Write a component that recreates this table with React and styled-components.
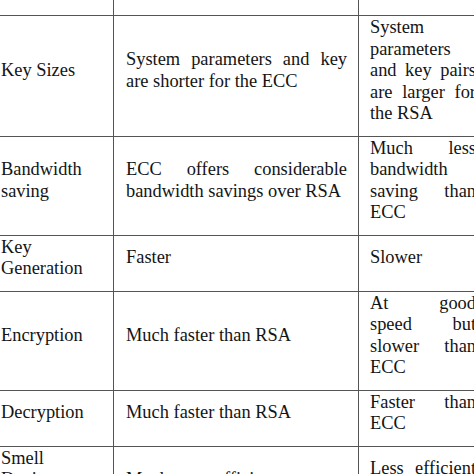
import React from 'react';
import styled, { createGlobalStyle } from 'styled-components';

const GlobalStyle = createGlobalStyle`
  html, body {
    margin: 0;
    padding: 0;
    background: #fff;
    overflow: hidden;
  }
`;

const Table = styled.div`
  display: grid;
  grid-template-columns: 113px 244px 130px;
  grid-auto-rows: auto;
  gap: 1px;
  background-color: #555;
  width: max-content;
  font-family: "Liberation Serif", "Times New Roman", serif;
  font-size: 18.4px;
  line-height: 21.5px;
  color: #141414;
`;

const HeadCell = styled.div`
  background-color: #fff;
  height: 15px;
`;

const Cell = styled.div`
  background-color: #fff;
  display: flex;
  flex-direction: column;
  justify-content: center;
  padding: 1px ${(p) => p.$right}px 11px ${(p) => p.$left}px;
  text-align: ${(p) => (p.$justify ? 'justify' : 'left')};
`;

const rows = [
  ['Key Sizes', 'System parameters and key are shorter for the ECC', 'System parameters and key pairs are larger for the RSA'],
  ['Bandwidth saving', 'ECC offers considerable bandwidth savings over RSA', 'Much less bandwidth saving than ECC'],
  ['Key Generation', 'Faster', 'Slower'],
  ['Encryption', 'Much faster than RSA', 'At good speed but slower than ECC'],
  ['Decryption', 'Much faster than RSA', 'Faster than ECC'],
  ['Smell Devices Application', 'Much more efficient', 'Less efficient than ECC'],
];

const App = () => {
  return (
    <>
      <GlobalStyle />
      <Table>
        <HeadCell />
        <HeadCell />
        <HeadCell />
        {rows.map(([feature, ecc, rsa]) => (
          <React.Fragment key={feature}>
            <Cell $left={1} $right={10}>{feature}</Cell>
            <Cell $left={12} $right={11} $justify>{ecc}</Cell>
            <Cell $left={11} $right={13} $justify>{rsa}</Cell>
          </React.Fragment>
        ))}
      </Table>
    </>
  );
};

export default App;
